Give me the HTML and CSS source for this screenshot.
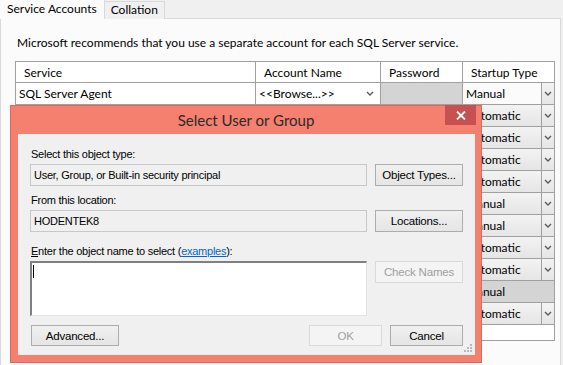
FILE: index.html
```html
<!DOCTYPE html>
<html lang="en">

<head>
  <meta charset="UTF-8">
  <title>Service Accounts</title>
  <link rel="stylesheet" href="styles.css">
</head>

<body>
  <div class="tabs">
    <div class="tab active">Service Accounts</div>
    <div class="tab">Collation</div>
  </div>

  <div class="panel">
    <p class="intro">Microsoft recommends that you use a separate account for each SQL Server service.</p>

    <div class="grid">
      <div class="row head">
        <div class="cell">Service</div>
        <div class="cell">Account Name</div>
        <div class="cell">Password</div>
        <div class="cell">Startup Type</div>
      </div>
      <div class="row">
        <div class="cell name">SQL Server Agent</div>
        <div class="cell account">
          <span class="combo-text">&lt;&lt;Browse...&gt;&gt;</span>
          <svg class="chev" width="8" height="5" viewBox="0 0 8 5"><polyline points="1,1 4,4 7,1" /></svg>
        </div>
        <div class="cell locked"></div>
        <div class="cell startup current">
          <span class="combo-text">Manual</span>
          <span class="drop"><svg class="chev" width="8" height="5" viewBox="0 0 8 5"><polyline points="1,1 4,4 7,1" /></svg></span>
        </div>
      </div>
      <!-- remaining rows are filled by the script -->
      <div id="rows"></div>
    </div>
  </div>

  <div class="dialog">
    <div class="titlebar">
      <span></span>
      <span class="title">Select User or Group</span>
      <button class="close">
        <svg width="10" height="9" viewBox="0 0 10 9"><path d="M1 0.5 L9 8.5 M9 0.5 L1 8.5" /></svg>
      </button>
    </div>
    <div class="dlg-body">
      <div class="label first">Select this object type:</div>
      <div class="line">
        <div class="textbox">User, Group, or Built-in security principal</div>
        <button class="btn">Object Types...</button>
      </div>
      <div class="label">From this location:</div>
      <div class="line">
        <div class="textbox">HODENTEK8</div>
        <button class="btn">Locations...</button>
      </div>
      <div class="label third"><u>E</u>nter the object name to select (<a href="#">examples</a>):</div>
      <div class="line">
        <div class="names"><span class="caret"></span></div>
        <button class="btn" disabled>Check Names</button>
      </div>
      <div class="footer">
        <button class="btn advanced">Advanced...</button>
        <span class="spacer"></span>
        <button class="btn small" disabled>OK</button>
        <button class="btn small">Cancel</button>
      </div>
      <svg class="grip" width="9" height="9" viewBox="0 0 9 9">
        <rect x="6" y="0" width="2" height="2" />
        <rect x="3" y="3" width="2" height="2" />
        <rect x="6" y="3" width="2" height="2" />
        <rect x="0" y="6" width="2" height="2" />
        <rect x="3" y="6" width="2" height="2" />
        <rect x="6" y="6" width="2" height="2" />
      </svg>
    </div>
  </div>

  <script>
    const startup = ["Automatic", "Automatic", "Automatic", "Automatic", "Manual", "Manual",
      "Automatic", "Automatic", "Manual", "Automatic"];
    const locked = 8;
    const chev = '<svg class="chev" width="8" height="5" viewBox="0 0 8 5"><polyline points="1,1 4,4 7,1" /></svg>';

    document.getElementById("rows").innerHTML = startup.map((type, i) => `
      <div class="row">
        <div class="cell name"></div>
        <div class="cell"></div>
        <div class="cell locked"></div>
        <div class="cell startup ${i === locked ? "disabled" : ""}">
          <span class="combo-text">${type}</span>
          ${i === locked ? "" : `<span class="drop">${chev}</span>`}
        </div>
      </div>
    `).join("");
  </script>
</body>

</html>
```

FILE: styles.css
```css
body {
  margin: 0;
  width: 563px;
  height: 365px;
  overflow: hidden;
  position: relative;
  background-color: #f0f0f0;
  font-family: Lato, "Noto Sans", sans-serif;
  font-size: 12px;
  color: #000;
}

.tabs {
  display: flex;
  height: 19px;
  align-items: flex-end;
}

.tab {
  height: 17px;
  line-height: 16px;
  padding: 0 6px;
  border: 1px solid #d9d9d9;
  border-bottom: none;
  background-color: #f0f0f0;
  margin-left: -1px;
}

.tab.active {
  height: 19px;
  line-height: 18px;
  margin-left: 0;
  padding: 0 7px 0 6px;
  background-color: #fbfbfb;
  border-color: #fbfbfb #d9d9d9 #fbfbfb #fbfbfb;
  position: relative;
  z-index: 1;
}

.panel {
  height: 346px;
  margin-right: 2px;
  padding: 16px 0 0 14px;
  background-color: #fbfbfb;
  border: 1px solid #d9d9d9;
  border-bottom: none;
  margin-top: -1px;
}

.intro {
  margin: 0 0 10px;
  padding-left: 2px;
  line-height: 16px;
}

.grid {
  width: 540px;
  height: 280px;
  box-sizing: border-box;
  background: #fff;
  border: 1px solid #a0a0a0;
}

.row {
  display: grid;
  grid-template-columns: 240px 125px 82px 91px;
  height: 22px;
}

.row.head {
  height: 21px;
}

.cell {
  box-sizing: border-box;
  border-right: 1px solid #a0a0a0;
  border-bottom: 1px solid #a0a0a0;
  display: flex;
  align-items: center;
  padding-left: 3px;
  white-space: nowrap;
  overflow: hidden;
}

.head .cell {
  padding-left: 8px;
}

.row .cell:last-child {
  border-right: none;
}

.locked {
  background-color: #d4d4d4;
}

.account {
  padding-right: 6px;
}

.combo-text {
  flex: 1;
}

.chev {
  fill: none;
  stroke: #5a5a5a;
  stroke-width: 1.4;
}

.startup {
  padding-left: 3px;
  background: linear-gradient(#f3f3f3, #e5e5e5);
}

.startup.current {
  background: #fbfbfb;
}

.startup.disabled {
  background: #d4d4d4;
}

.drop {
  width: 12px;
  align-self: stretch;
  display: flex;
  align-items: center;
  justify-content: center;
  border-left: 1px solid #a0a0a0;
  background: linear-gradient(#f3f3f3, #e5e5e5);
}

/* dialog window */
.dialog {
  position: absolute;
  left: 10px;
  top: 105px;
  width: 472px;
  height: 258px;
  box-sizing: border-box;
  background-color: #f6806f;
  border: 1px solid #d86b5c;
  display: flex;
  flex-direction: column;
}

.titlebar {
  height: 28px;
  display: grid;
  grid-template-columns: 1fr auto 1fr;
}

.title {
  font-size: 15px;
  line-height: 28px;
  color: #2b2b2b;
}

.close {
  justify-self: end;
  align-self: start;
  width: 31px;
  height: 20px;
  margin: -1px 5px 0 0;
  padding: 0;
  border: none;
  background-color: #c75050;
  display: flex;
  align-items: center;
  justify-content: center;
}

.close path {
  stroke: #fff;
  stroke-width: 1.8;
}

.dlg-body {
  flex: 1;
  margin: 0 6px 7px 7px;
  padding: 0 12px;
  background-color: #f0f0f0;
  position: relative;
  font-family: "Liberation Sans", Arial, sans-serif;
  font-size: 11px;
  letter-spacing: -0.25px;
}

.label {
  line-height: 13px;
  margin: 8px 0 3px 1px;
}

.label.first {
  margin-top: 14px;
  margin-bottom: 3px;
}

.label.third {
  margin-top: 13px;
}

.label a {
  color: #0066cc;
}

.line {
  display: flex;
  gap: 8px;
  align-items: flex-start;
}

.textbox {
  width: 337px;
  height: 22px;
  box-sizing: border-box;
  border: 1px solid #c8c8c8;
  padding-left: 3px;
  line-height: 20px;
}

.names {
  width: 337px;
  height: 55px;
  box-sizing: border-box;
  background: #fff;
  border: 1px solid #e3e3e3;
  border-top: 2px solid #808080;
  border-left: 2px solid #808080;
  padding: 2px 0 0 1px;
}

.caret {
  display: block;
  width: 1px;
  height: 13px;
  background: #000;
}

.btn {
  width: 88px;
  height: 22px;
  padding: 0;
  font-family: inherit;
  font-size: 11.5px;
  letter-spacing: -0.2px;
  color: #000;
  border: 1px solid #acacac;
  background: linear-gradient(#f0f0f0, #e5e5e5);
}

.btn:disabled {
  color: #a0a0a0;
  border-color: #d9d9d9;
  background: #f4f4f4;
}

.footer {
  display: flex;
  gap: 8px;
  margin-top: 9px;
}

.footer .btn {
  height: 21px;
}

.advanced {
  margin-left: 1px;
}

.spacer {
  flex: 1;
}

.btn.small {
  width: 73px;
}

.grip {
  position: absolute;
  right: 2px;
  bottom: 2px;
  fill: #b8b8b8;
}
```
